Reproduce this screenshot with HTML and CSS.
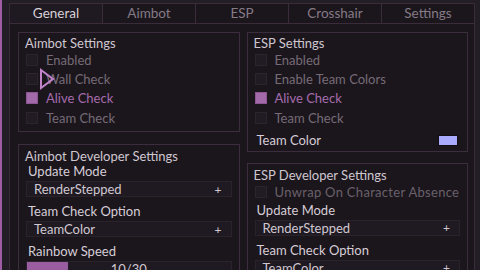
FILE: index.html
```html
<!DOCTYPE html>
<html>
<head>
<meta charset="utf-8">
<link rel="stylesheet" href="styles.css">
</head>
<body>
<div class="app">
  <div class="accent"></div>
  <div class="window">
    <div class="tabs">
      <div class="tab active">General</div>
      <div class="tab">Aimbot</div>
      <div class="tab">ESP</div>
      <div class="tab">Crosshair</div>
      <div class="tab">Settings</div>
    </div>
    <div class="content">
      <div class="col">
        <section class="box">
          <div class="title">Aimbot Settings</div>
          <div class="check"><span class="cb"></span><span class="lbl">Enabled</span></div>
          <div class="check"><span class="cb"></span><span class="lbl">Wall Check</span></div>
          <div class="check on"><span class="cb"></span><span class="lbl">Alive Check</span></div>
          <div class="check"><span class="cb"></span><span class="lbl">Team Check</span></div>
        </section>
        <section class="box dev">
          <div class="title">Aimbot Developer Settings</div>
          <div class="field-label">Update Mode</div>
          <div class="dropdown"><span>RenderStepped</span><span class="plus">+</span></div>
          <div class="field-label">Team Check Option</div>
          <div class="dropdown"><span>TeamColor</span><span class="plus">+</span></div>
          <div class="field-label">Rainbow Speed</div>
          <div class="slider"><div class="fill" style="width:20%"></div><div class="val">10/30</div></div>
        </section>
      </div>
      <div class="col right">
        <section class="box tight">
          <div class="title">ESP Settings</div>
          <div class="check"><span class="cb"></span><span class="lbl">Enabled</span></div>
          <div class="check"><span class="cb"></span><span class="lbl">Enable Team Colors</span></div>
          <div class="check on"><span class="cb"></span><span class="lbl">Alive Check</span></div>
          <div class="check"><span class="cb"></span><span class="lbl">Team Check</span></div>
          <div class="colorrow"><span>Team Color</span><span class="swatch"></span></div>
        </section>
        <section class="box dev">
          <div class="title">ESP Developer Settings</div>
          <div class="check"><span class="cb"></span><span class="lbl wide">Unwrap On Character Absence</span></div>
          <div class="field-label">Update Mode</div>
          <div class="dropdown"><span>RenderStepped</span><span class="plus">+</span></div>
          <div class="field-label">Team Check Option</div>
          <div class="dropdown"><span>TeamColor</span><span class="plus">+</span></div>
        </section>
      </div>
    </div>
  </div>
</div>
<svg class="cursor" width="16" height="24" viewBox="0 0 16 24"><path d="M2 2 L14 11 L2 20 Z" fill="none" stroke="#c283cb" stroke-width="2" stroke-linejoin="miter"/></svg>
</body>
</html>
```
FILE: styles.css
```css
html, body {
  margin: 0;
  height: 100%;
  overflow: hidden;
}
body {
  background: #231d25;
  font-family: Lato, "Noto Sans", sans-serif;
  font-size: 13px;
  color: #cfc6d0;
}
.app {
  display: flex;
  height: 270px;
}
.accent {
  width: 2px;
  background: #9d5ca3;
  flex: none;
}
.window {
  flex: 1;
  margin: 3px 5px 0 7px;
  border: 1px solid #3a2c3b;
  border-bottom: none;
  background: #1b161c;
  display: flex;
  flex-direction: column;
}
.tabs {
  display: flex;
  height: 19px;
  border-bottom: 1px solid #3a2c3b;
  flex: none;
}
.tab {
  flex: 1;
  text-align: center;
  line-height: 19px;
  font-size: 13.5px;
  color: #857a86;
  border-right: 1px solid #3a2c3b;
}
.tab:last-child { border-right: none; }
.tab.active {
  color: #d8d0d8;
  background: #1f1a21;
}
.content {
  display: grid;
  grid-template-columns: 1fr 1fr;
  column-gap: 7px;
  padding: 8px 6px 0 8px;
  align-items: start;
}
.col {
  display: flex;
  flex-direction: column;
  gap: 12px;
}
.col.right { gap: 11px; }
.box {
  border: 1px solid #3c2d3e;
  padding: 3px 0 4px;
}
.box.tight { padding-bottom: 1px; }
.box.dev { padding-top: 4px; padding-bottom: 20px; }
.title {
  line-height: 14px;
  padding-left: 6px;
  color: #cfc6d0;
}
.check {
  display: flex;
  align-items: center;
  height: 19.33px;
  padding-left: 7px;
}
.cb {
  width: 10px;
  height: 10px;
  border: 1px solid #2b242d;
  background: #211b23;
  margin-right: 8px;
  flex: none;
}
.lbl { color: #766b77; }
.lbl.wide { letter-spacing: 0.3px; color: #6a606b; }
.check.on .cb {
  background: #a26aa8;
  border-color: #8a5590;
}
.check.on .lbl { color: #a56cad; }
.colorrow {
  display: flex;
  justify-content: space-between;
  align-items: center;
  height: 20px;
  margin-top: 3px;
  padding: 0 9px;
  color: #d6cdd7;
}
.swatch {
  width: 18px;
  height: 9px;
  border: 1px solid #120e13;
  background: #aaaaff;
}
.field-label {
  line-height: 16px;
  padding-left: 9px;
  color: #d6cdd7;
}
.dropdown {
  margin: 2px 7px 6px;
  height: 14px;
  border: 1px solid #2a232c;
  background: #1f1a21;
  display: flex;
  justify-content: space-between;
  align-items: center;
  padding: 0 9px 0 7px;
  color: #d0c7d1;
}
.plus { font-size: 12px; }
.slider {
  margin: 2px 7px 0;
  height: 14px;
  border: 1px solid #2a232c;
  background: #1f1a21;
  display: grid;
}
.fill, .val { grid-area: 1 / 1; }
.fill {
  background: #9a5ea0;
  justify-self: start;
  height: 100%;
}
.val {
  justify-self: center;
  line-height: 14px;
  color: #d0c7d1;
}
.cursor {
  position: absolute;
  left: 39px;
  top: 68px;
}
```
